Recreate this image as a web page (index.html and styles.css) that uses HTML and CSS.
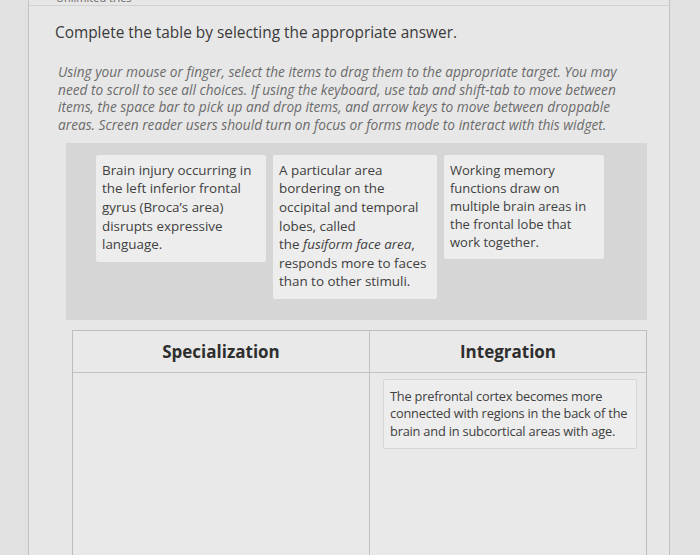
FILE: index.html
```html
<!DOCTYPE html>
<html lang="en">
<head>
<meta charset="UTF-8">
<meta name="viewport" content="width=device-width, initial-scale=1.0">
<title>Complete the table</title>
<link rel="stylesheet" href="styles.css">
</head>
<body>

<div class="page">
  <div class="tries"><span>Unlimited tries</span></div>

  <h1>Complete the table by selecting the appropriate answer.</h1>

  <p class="instructions">Using your mouse or finger, select the items to drag them to the appropriate target. You may need to scroll to see all choices. If using the keyboard, use tab and shift-tab to move between items, the space bar to pick up and drop items, and arrow keys to move between droppable areas. Screen reader users should turn on focus or forms mode to interact with this widget.</p>

  <div class="bank">
    <div class="card c1">Brain injury occurring in the left inferior frontal gyrus (Broca’s area) disrupts expressive language.</div>
    <div class="card c2">A particular area bordering on the occipital and temporal lobes, called<br>the <i>fusiform face area</i>, responds more to faces than to other stimuli.</div>
    <div class="card c3">Working memory functions draw on multiple brain areas in the frontal lobe that work together.</div>
  </div>

  <div class="table">
    <div class="head">Specialization</div>
    <div class="head right">Integration</div>
    <div class="zone"></div>
    <div class="zone right">
      <div class="card placed">The prefrontal cortex becomes more connected with regions in the back of the brain and in subcortical areas with age.</div>
    </div>
  </div>
</div>

</body>
</html>
```

FILE: styles.css
```css
body {
  margin: 0;
  font-family: "Open Sans", "Noto Sans", sans-serif;
  background: #e1e1e1;
  color: #333;
  overflow: hidden;
}

.page {
  margin-left: 28px;
  width: 640px;
  height: 555px;
  background: #e7e7e7;
  border-left: 1px solid #c2c2c2;
  border-right: 1px solid #c2c2c2;
}

.tries {
  height: 5px;
  overflow: hidden;
  border-bottom: 1px solid #d2d2d2;
  padding-left: 27px;
}

.tries span {
  display: block;
  margin-top: -8px;
  font-size: 11px;
  line-height: 12px;
  color: #666;
}

h1 {
  margin: 16px 0 0 26px;
  font-size: 15.4px;
  font-weight: 400;
  line-height: 22px;
  color: #3a3a3a;
}

.instructions {
  margin: 19px 0 0 29px;
  width: 590px;
  font-size: 13.7px;
  font-style: italic;
  line-height: 17.7px;
  color: #6b6b6b;
}

.bank {
  margin: 9px 0 0 37px;
  width: 551px;
  height: 165px;
  padding: 12px 0 0 30px;
  background: #d6d6d6;
  display: flex;
  gap: 7px;
  align-items: flex-start;
}

.card {
  background: #ededed;
  padding: 6px 8px 8px 6px;
  font-size: 13.4px;
  line-height: 18.6px;
  color: #404040;
  border-radius: 2px;
  box-sizing: border-box;
}

.c1 { width: 170px; }
.c2 { width: 164px; }
.c3 { width: 160px; font-size: 13px; line-height: 18px; }

.table {
  margin: 10px 0 0 43px;
  width: 573px;
  height: 226px;
  border: 1px solid #bdbdbd;
  border-bottom: none;
  display: grid;
  grid-template-columns: 296px 1fr;
  grid-template-rows: 42px 1fr;
  background: #e9e9e9;
}

.head {
  border-bottom: 1px solid #c2c2c2;
  display: flex;
  align-items: center;
  justify-content: center;
  font-size: 17px;
  font-weight: 700;
  color: #2e2e2e;
}

.right {
  border-left: 1px solid #c2c2c2;
}

.zone.right {
  padding: 6px 9px 0 13px;
}

.placed {
  border: 1px solid #d6d6d6;
  padding: 8px 4px 8px 6px;
  font-size: 12.8px;
  line-height: 17.5px;
  letter-spacing: -0.2px;
}
```
